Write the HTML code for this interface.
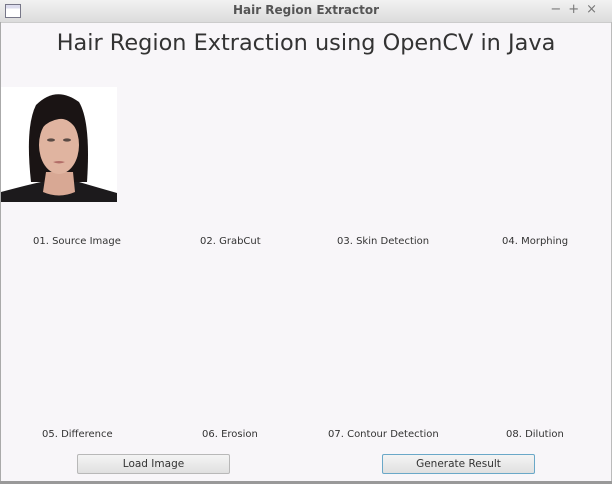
<!DOCTYPE html>
<html><head><style>
body{margin:0;width:612px;height:484px;background:#f8f6f9;font-family:"DejaVu Sans","Liberation Sans",sans-serif;position:relative;overflow:hidden;color:#333}
.tb{position:absolute;left:0;top:0;width:612px;height:22px;background:linear-gradient(#f2f2f2,#dcdcdc);border-bottom:1px solid #ccc}
.tb .t{position:absolute;left:0;width:612px;top:3px;text-align:center;font-weight:bold;font-size:12px;color:#555}
.l{position:absolute;font-size:10px;color:#333;white-space:nowrap}
.btn{position:absolute;height:18px;border:1px solid #b8b8b8;border-radius:2px;background:linear-gradient(#f4f4f4,#e0e0e0);font-size:10.5px;text-align:center;line-height:19px;color:#333}
</style></head><body>
<div class="tb"><div class="t">Hair Region Extractor</div>
<div style="position:absolute;left:5px;top:4px;width:14px;height:12px;border:1px solid #778;background:linear-gradient(#dde 0 30%,#fff 30%)"></div>
<div style="position:absolute;right:8px;top:2px;font-size:13px;color:#777;letter-spacing:7px">−+×</div></div>
<div style="position:absolute;left:0;top:22px;width:1px;height:460px;background:#aaa"></div>
<div style="position:absolute;right:0;top:22px;width:1px;height:460px;background:#bbb"></div>
<div style="position:absolute;left:0;top:481px;width:612px;height:3px;background:#999"></div>
<div style="position:absolute;left:0;top:30px;width:612px;text-align:center;font-size:22.4px;color:#333">Hair Region Extraction using OpenCV in Java</div>
<svg style="position:absolute;left:1px;top:87px" width="116" height="115" viewBox="0 0 116 115">
<rect width="116" height="115" fill="#fff"/>
<path d="M30 95 Q24 40 35 18 Q55 -2 78 15 Q90 35 86 95 Z" fill="#1a1414"/>
<path d="M0 115 L0 105 Q30 97 40 95 L78 95 Q95 100 116 106 L116 115Z" fill="#1c1a1c"/>
<path d="M45 85 L72 85 L74 105 Q58 112 42 105Z" fill="#d8a894"/>
<ellipse cx="58" cy="58" rx="20" ry="29" fill="#e0b4a0"/>
<path d="M38 45 Q48 22 62 25 Q75 30 80 50 Q70 30 58 32 Q45 34 38 45Z" fill="#1a1414"/>
<ellipse cx="50" cy="53" rx="4" ry="1.6" fill="#5a4a44"/><ellipse cx="66" cy="53" rx="4" ry="1.6" fill="#5a4a44"/>
<path d="M52 75 Q58 78 64 75 Q58 73 52 75Z" fill="#b26e68"/>
</svg>
<div class="l" style="left:33px;top:236px">01. Source Image</div>
<div class="l" style="left:200px;top:236px">02. GrabCut</div>
<div class="l" style="left:337px;top:236px">03. Skin Detection</div>
<div class="l" style="left:502px;top:236px">04. Morphing</div>
<div class="l" style="left:42px;top:429px">05. Difference</div>
<div class="l" style="left:202px;top:429px">06. Erosion</div>
<div class="l" style="left:328px;top:429px">07. Contour Detection</div>
<div class="l" style="left:506px;top:429px">08. Dilution</div>
<div class="btn" style="left:77px;top:454px;width:151px">Load Image</div>
<div class="btn" style="left:382px;top:454px;width:151px;border-color:#6aa8c8">Generate Result</div>
</body></html>
